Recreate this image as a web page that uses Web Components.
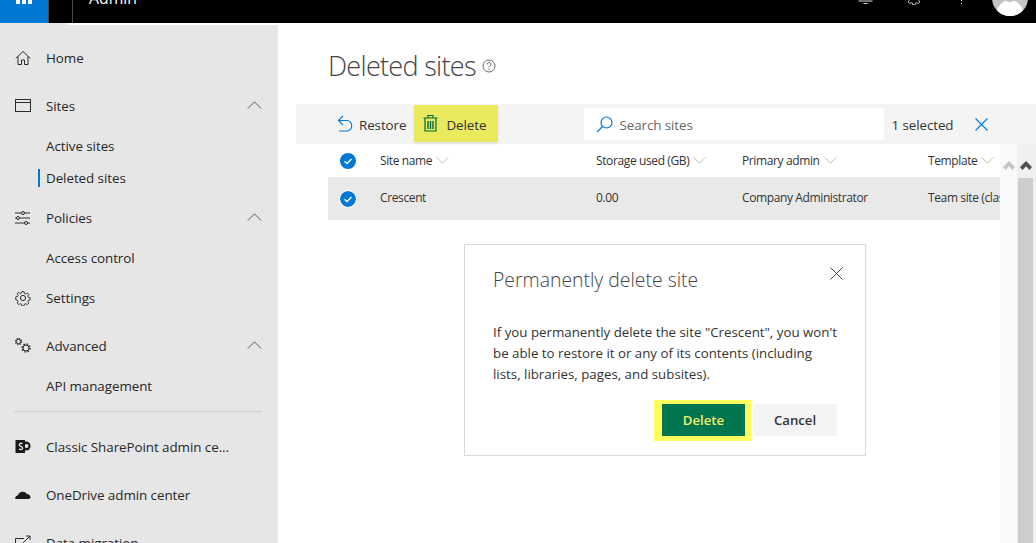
<!DOCTYPE html>
<html><head><meta charset="utf-8"><style>
html,body{margin:0;height:100%;overflow:hidden;background:#fff}
body{font-family:"Open Sans","Noto Sans",sans-serif;color:#333}
</style></head><body>
<admin-app></admin-app>
<script>
const I={
home:'<path d="M.8 8.300 8 1.500l7.200 6.800M3 6.500V14.500h3.500V10h3v4.500H13V6.500"/>',
sites:'<rect x=".5" y="1.500" width="15" height="12"/><path d="M.5 4.500h15"/>',
policies:'<path d="M0 3h15M0 8h15M0 13h15"/><circle cx="8" cy="3" r="1.500" fill="#e6e6e6"/><circle cx="3" cy="8" r="1.500" fill="#e6e6e6"/><circle cx="11" cy="13" r="1.500" fill="#e6e6e6"/>',
gear:'<circle cx="8" cy="8" r="2.600"/><path d="M6.800 1h2.400l.4 2 1.400.6 1.700-1.100 1.700 1.700-1.100 1.700.6 1.400 2 .4v2.400l-2 .4-.6 1.400 1.100 1.700-1.700 1.700-1.700-1.100-1.400.6-.4 2H6.800l-.4-2-1.400-.6-1.700 1.100-1.700-1.700 1.100-1.700-.6-1.400-2-.4V6.800l2-.4.6-1.400-1.100-1.700 1.700-1.700L5 3.200l1.400-.6z" transform="translate(.7 .7) scale(.91)"/>',
adv:'<circle cx="3.500" cy="3.500" r="2.200"/><circle cx="3.500" cy="3.500" r="3" stroke-dasharray="1.200 1.150" stroke-width="1.300"/><circle cx="11" cy="10" r="3"/><circle cx="11" cy="10" r="4" stroke-dasharray="1.500 1.640" stroke-width="1.500"/>',
sp:'<circle cx="11" cy="7" r="4.600" fill="#1a1a1a" stroke="none"/><circle cx="11.500" cy="7" r="2" fill="#e6e6e6" stroke="none"/><rect x=".5" y="1" width="9.500" height="13" fill="#1a1a1a" stroke="none"/><path d="M7.500 4.600C5 3.600 3.600 5.200 4.600 6.600c.8 1 3 1 3 2.600 0 1.400-2 1.600-3.600.8" stroke="#e6e6e6" stroke-width="1.300"/>',
drive:'<path d="M.5 12c-.8-1.800.6-3.400 2.200-3.400C3.400 6.500 5 5 7 4.700c2-.3 4 .6 4.700 2.300 2.200-.1 4 1.700 3.800 3.300-.1 1.100-1 1.700-2 1.700H2c-.7 0-1.200.2-1.500 0z" fill="#1a1a1a" stroke="none"/>',
migrate:'<path d="M9 3.500H.5v11h11V8M8 8l7-7M11 1h4v4"/>'
};
const ico=(n,s=16)=>`<svg width="${s}" height="${s}" viewBox="0 0 16 16" fill="none" stroke="#2b2b2b" stroke-width="1">${I[n]}</svg>`;
const chev=(up,c='#555',w=16,h=9)=>`<svg width="${w}" height="${h}" viewBox="0 0 16 9" fill="none" stroke="${c}" stroke-width="1"><path d="${up?'M.5 8.500 8 1l7.500 7.500':'M.5.500 8 8 15.500.500'}"/></svg>`;
const fat=c=>`<svg width="12" height="9" viewBox="0 0 12 9" fill="${c}"><path d="M6 0 12 6 9.500 9 6 5.200 2.500 9 0 6z"/></svg>`;
function def(name,css,html){customElements.define(name,class extends HTMLElement{
 constructor(){super();const r=this.attachShadow({mode:'open'});r.innerHTML=`<style>${css}</style>${typeof html==='function'?html(this):html}`}
})}

def('top-bar',`:host{display:block;height:23px;background:#000;overflow:hidden}
.in{height:23px;display:flex}
.w{width:48px;height:23px;background:#0078d4;display:flex;justify-content:center;align-items:flex-start;gap:2px}
.w i{width:4px;height:4px;background:#fff;display:block}
.s{width:1px;height:23px;background:#4a4a4a}
.g{width:23px}
.t{margin:-14px 0 0 16px;color:#fff;font-size:15.800px;line-height:24px;height:24px}
.r{margin-left:auto;display:flex;align-items:flex-start}
.av{width:36px;height:36px;border-radius:50%;background:#c4c4c4;margin:-20px 8px 0 0;position:relative;overflow:hidden}
.av:after{content:"";position:absolute;left:4px;right:4px;top:20px;height:32px;border-radius:50%;background:#fff}
.av:before{content:"";position:absolute;left:11px;width:14px;height:14px;top:8px;border-radius:50%;background:#c4c4c4;z-index:1}
`,`<div class="in"><div class="w"><i></i><i></i><i></i></div><div class="s"></div><div class="g"></div><div class="s"></div><div class="t">Admin</div>
<div class="r">
<svg style="margin:-17px 33px 0 0" width="15" height="21" viewBox="0 0 15 21" fill="none" stroke="#ddd"><path d="M3 17V9a4.500 5 0 0 1 9 0v8M.5 18h14M5.500 20.500h4"/></svg>
<svg style="margin:-11px 39px 0 0" width="16" height="16" viewBox="0 0 16 16" fill="none" stroke="#ddd">${I.gear}</svg>
<div style="width:1px;height:6px;margin-right:30px;background:repeating-linear-gradient(#ddd 0 1px,transparent 1px 3px)"></div>
<div class="av"></div></div></div>`);

def('nav-item',`:host{display:flex;align-items:center;height:var(--h,48px);position:relative;font-size:13.400px;letter-spacing:-.06px;color:#262626;white-space:nowrap}
.i{width:16px;height:16px;margin:0 15px 0 15px;display:flex;flex:none}
.c{margin-left:auto;margin-right:16px;margin-top:-2px;display:flex}
:host([sub]) {--h:32px;padding-left:46px}
:host([sub]) .i,:host([sub]) .c{display:none}
:host([active]):before{content:"";position:absolute;left:38px;top:7px;width:2px;height:18px;background:#0078d4}
`,el=>`<span class="i">${el.getAttribute('icon')?ico(el.getAttribute('icon')):''}</span><slot></slot><span class="c">${el.hasAttribute('open')?chev(true,'#444',15,8):''}</span>`);

def('side-nav',`:host{display:block;width:278px;background:#e6e6e6;flex:none;padding-top:11px;box-sizing:border-box;overflow:hidden;position:relative}
:host:before{content:"";position:absolute;left:67px;right:0;top:0;height:2px;background:#fff}
.hr{height:1px;background:#ccc;margin:9px 16px 11px 14px}
`,`<nav-item icon="home">Home</nav-item>
<nav-item icon="sites" open>Sites</nav-item>
<nav-item sub>Active sites</nav-item>
<nav-item sub active>Deleted sites</nav-item>
<nav-item icon="policies" open>Policies</nav-item>
<nav-item sub>Access control</nav-item>
<nav-item icon="gear">Settings</nav-item>
<nav-item icon="adv" open>Advanced</nav-item>
<nav-item sub>API management</nav-item>
<div class="hr"></div>
<nav-item icon="sp">Classic SharePoint admin ce...</nav-item>
<nav-item icon="drive">OneDrive admin center</nav-item>
<nav-item icon="migrate">Data migration</nav-item>`);

def('cmd-bar',`:host{display:flex;align-items:center;height:40px;background:#f4f4f4;font-size:13.400px;letter-spacing:-.08px;color:#333;white-space:nowrap;margin-left:18px}
.r{display:flex;align-items:center;margin-left:41px;gap:6px}
.d{display:flex;align-items:center;gap:8px;background:#e9ea5e;height:37px;margin-top:-2px;width:84px;box-sizing:border-box;padding-left:9px;margin-left:8px;box-shadow:0 2px 2px rgba(0,0,0,.08)}
.s{display:flex;align-items:center;gap:6px;width:300px;height:32px;background:#fff;margin-left:86px;padding-left:12px;box-sizing:border-box;color:#666}
.n{margin-left:7px;color:#333}
.x{margin-left:22px;display:flex}
.l{position:relative;top:1px}
`,`<span class="r"><svg width="16" height="18" viewBox="0 0 16 18" fill="none" stroke="#0078d4" stroke-width="1.100"><path d="M6 1 1.500 5.500 6 10M2 5.500h8a4.500 5 0 0 1 0 10.500H2"/></svg><span class="l">Restore</span></span>
<span class="d"><svg width="15" height="18" viewBox="0 0 15 18" fill="none" stroke="#006b3c" stroke-width="1.200"><path d="M.5 4h14M5 4V1.500h5V4M2 4v13h11V4"/><path d="M5 7v8M7.500 7v8M10 7v8" stroke-width="1.400"/></svg><span class="l" style="top:2px">Delete</span></span>
<span class="s"><svg width="17" height="17" viewBox="0 0 17 17" fill="none" stroke="#0078d4" stroke-width="1.200"><circle cx="10.500" cy="6.500" r="5.500"/><path d="M6.500 10.500 1 16"/></svg><span class="l">Search sites</span></span>
<span class="n l">1 selected</span>
<span class="x"><svg width="13" height="13" viewBox="0 0 13 13" fill="none" stroke="#0078d4" stroke-width="1.100"><path d="M.5.500l12 12M12.500.500l-12 12"/></svg></span>`);

const check=`<svg width="16" height="16" viewBox="0 0 16 16"><circle cx="8" cy="8" r="8" fill="#0078d4"/><path d="M4.500 8.300 7 10.500l4.500-4.500" fill="none" stroke="#fff" stroke-width="1.400"/></svg>`;
const grid=`display:grid;grid-template-columns:52px 216px 146px 186px 1fr;align-items:center;white-space:nowrap`;
def('site-table',`:host{display:block;margin-left:50px;width:672px;font-size:12px;letter-spacing:-.38px;color:#333;overflow:hidden}
.h{${grid};height:33px}
.b{${grid};height:43px;background:#e9e9e9}
.b span:not(.ck){position:relative;top:-1px}
.ck{padding-left:12px;display:flex}
.b .ck svg{border-radius:50%;box-shadow:0 0 0 1px #fff}
.hc{display:flex;align-items:center;gap:4px}
`,`<div class="h"><span class="ck">${check}</span><span class="hc">Site name ${chev(false,'#aaa',13,7)}</span><span class="hc">Storage used (GB) ${chev(false,'#aaa',13,7)}</span><span class="hc">Primary admin ${chev(false,'#aaa',13,7)}</span><span class="hc">Template ${chev(false,'#aaa',13,7)}</span></div>
<div class="b"><span class="ck">${check}</span><span>Crescent</span><span>0.00</span><span>Company Administrator</span><span>Team site (classic experience)</span></div>`);

def('confirm-dialog',`:host{display:block;position:absolute;left:186px;top:221px;width:402px;height:212px;background:#fff;border:1px solid #d9d9d9;box-sizing:border-box;padding:19px 28px 0;color:#333}
h2{margin:0;font-weight:300;font-size:19.400px;line-height:32px;color:#444}
p{margin:26px 0 0;font-size:13.300px;line-height:21px;color:#333;width:345px}
.x{position:absolute;right:22px;top:22px;display:flex}
.f{display:flex;justify-content:flex-end;margin-top:15px;align-items:flex-start}
.del{box-sizing:border-box;width:97px;height:41px;background:#00754f;color:#f2f06a;font-weight:600;font-size:13.200px;display:flex;align-items:center;justify-content:center;border:solid #ffff5c;border-width:4px 6px 5px 8px;margin-right:2px}
.can{width:84px;height:32px;margin-top:4px;background:#f4f4f4;font-weight:600;font-size:13.200px;display:flex;align-items:center;justify-content:center;color:#333}
`,`<h2>Permanently delete site</h2><span class="x"><svg width="13" height="13" viewBox="0 0 13 13" fill="none" stroke="#444"><path d="M.5.500l12 12M12.500.500l-12 12"/></svg></span>
<p>If you permanently delete the site "Crescent", you won't be able to restore it or any of its contents (including lists, libraries, pages, and subsites).</p>
<div class="f"><span class="del">Delete</span><span class="can">Cancel</span></div>`);

def('scroll-bars',`:host{display:flex;width:36px;position:absolute;right:0;top:121px;bottom:0}
.a{width:17px;background:#f9f9f9;display:flex;justify-content:center;padding-top:17px;box-sizing:border-box}
.b{width:19px;background:#f0f0f0;display:flex;flex-direction:column}
.u{height:34px;width:16px;display:flex;justify-content:center;padding-top:17px;padding-left:1px;box-sizing:border-box}
.t{flex:1;width:15px;margin-left:1px;background:#cdcdcd}
`,`<div class="a">${fat('#c4c4c4')}</div><div class="b"><div class="u">${fat('#505050')}</div><div class="t"></div></div>`);

def('main-pane',`:host{display:block;flex:1;position:relative;background:#fff;min-width:0;overflow:hidden}
.t{display:flex;align-items:center;gap:6px;margin:0 0 0 50px;height:81px;padding-top:4px;box-sizing:border-box}
h1{margin:0;font-weight:300;font-size:27px;letter-spacing:-.7px;color:#444;line-height:40px}
`,`<div class="t"><h1>Deleted sites</h1><svg width="14" height="14" viewBox="0 0 14 14" fill="none" stroke="#666"><circle cx="7" cy="7" r="6"/><path d="M5 5.500a2 2 0 1 1 2.800 1.800c-.6.300-.8.700-.8 1.300M7 9.800v1.200"/></svg></div>
<cmd-bar></cmd-bar><site-table></site-table><confirm-dialog></confirm-dialog><scroll-bars></scroll-bars>`);

def('admin-app',`:host{display:flex;flex-direction:column;height:543px;width:1036px;overflow:hidden}
.m{display:flex;flex:1;min-height:0}
`,`<top-bar></top-bar><div class="m"><side-nav></side-nav><main-pane></main-pane></div>`);
</script>
</body></html>
